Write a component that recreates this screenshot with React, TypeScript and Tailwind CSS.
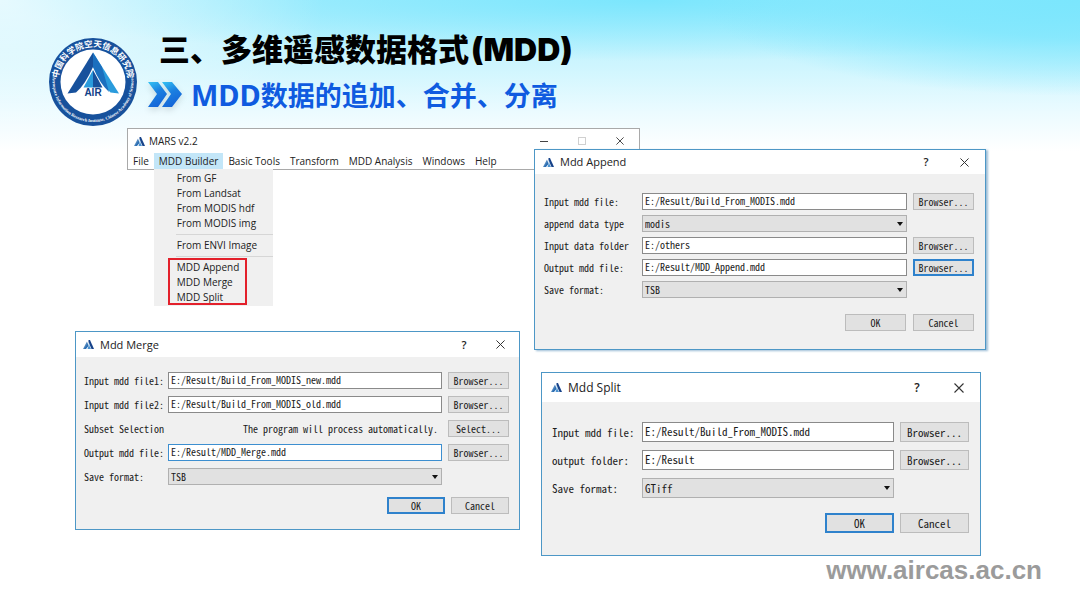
import type { ReactNode } from "react";

function MarsIcon({ className }: { className: string }) {
  return (
    <svg viewBox="0 0 22 18" className={className} aria-hidden="true">
      <path d="M8 3 L0 18 H5 L9 10 Z" fill="#4f86bd" />
      <path d="M8 4 L11 12 L6 18 H2 L8 9 Z" fill="#2d6fb4" />
      <path d="M11 0 H14 L22 18 H17 L11 4 Z" fill="#17438a" />
      <path d="M12 4 L13 12 L16 18 H9 L11 12 Z" fill="#4b92cf" />
    </svg>
  );
}

function CloseIcon({ className }: { className: string }) {
  return (
    <svg viewBox="0 0 10 10" className={className} aria-hidden="true">
      <path d="M0.5 0.5 L9.5 9.5 M9.5 0.5 L0.5 9.5" stroke="#333" strokeWidth="1.1" fill="none" />
    </svg>
  );
}

function InstituteLogo() {
  return (
    <svg viewBox="0 0 88 88" className="size-[88px] shrink-0" role="img" aria-label="AIR">
      <defs>
        <path id="ring-top" d="M 9.5 50 A 35 35 0 1 1 78.5 50" />
        <path id="ring-bottom" d="M 4 38 A 40.4 40.4 0 1 0 84 38" />
      </defs>
      <circle cx="44" cy="44" r="44" fill="#17519c" />
      <circle cx="44" cy="44" r="32.5" fill="#fff" />
      <text fill="#fff" fontSize="8.5" fontWeight="700" fontFamily="'Noto Sans CJK SC', sans-serif">
        <textPath href="#ring-top" startOffset="50%" textAnchor="middle">
          中国科学院空天信息研究院
        </textPath>
      </text>
      <text fill="#fff" fontSize="4.4" fontWeight="700" fontFamily="'Liberation Serif', serif">
        <textPath href="#ring-bottom" startOffset="50%" textAnchor="middle">
          Aerospace Information Research Institute, Chinese Academy of Sciences
        </textPath>
      </text>
      <path d="M44 14.5 L18.5 55.5 L27 54.5 Q36 47 44 29 Z" fill="#17519c" />
      <path d="M44 14.5 L70 55.5 L61.5 54.5 Q53 47 44 29 Z" fill="#2a9bdc" />
      <path d="M44 14.5 L53 29 L60 54 Q51 46 44 29 Z" fill="#1b6fbe" />
      <path d="M44 32 L34.5 49.5 H44 Z" fill="#2a9bdc" />
      <path d="M44 32 L53.5 49.5 H44 Z" fill="#17519c" />
      <text
        x="44"
        y="58"
        textAnchor="middle"
        fontSize="10"
        fontWeight="700"
        fill="#123f87"
        fontFamily="'Liberation Sans', sans-serif"
      >
        AIR
      </text>
    </svg>
  );
}

function DoubleChevron() {
  return (
    <svg viewBox="0 0 38 30" className="h-[30px] w-[38px] shrink-0 drop-shadow-md" aria-hidden="true">
      <defs>
        <linearGradient id="chevron" x1="0" y1="0" x2="0.4" y2="1">
          <stop offset="0" stopColor="#35c3f3" />
          <stop offset="0.5" stopColor="#1b7fe0" />
          <stop offset="1" stopColor="#1566d8" />
        </linearGradient>
      </defs>
      <path d="M1 2 H11 L20 14 L11 27 H1 L10 14 Z" fill="url(#chevron)" />
      <path d="M15 2 H25 L35 14 L25 27 H15 L24 14 Z" fill="url(#chevron)" />
    </svg>
  );
}

type Size = "normal" | "large";

function PushButton({
  children,
  size = "normal",
  focused = false,
}: {
  children: ReactNode;
  size?: Size;
  focused?: boolean;
}) {
  return (
    <button
      type="button"
      className={`flex w-full items-center justify-center bg-[#e1e1e1] whitespace-nowrap ${
        size === "large" ? "h-5" : "h-[17px]"
      } ${focused ? "border-2 border-[#2f82cc]" : "border border-[#bcbcbc]"}`}
    >
      {children}
    </button>
  );
}

type Field = {
  label: string;
  kind: "text" | "select" | "note";
  value: string;
  button?: string;
  active?: boolean;
  buttonFocused?: boolean;
};

function FieldRow({ field, id, size }: { field: Field; id: string; size: Size }) {
  const height = size === "large" ? "h-5" : "h-[17px]";
  return (
    <>
      {field.kind === "note" ? (
        <span className="whitespace-nowrap">{field.label}</span>
      ) : (
        <label htmlFor={id} className="whitespace-nowrap">
          {field.label}
        </label>
      )}
      {field.kind === "text" && (
        <input
          id={id}
          type="text"
          defaultValue={field.value}
          className={`w-full min-w-0 border bg-white px-0.5 pb-0.5 outline-none ${height} ${
            field.active ? "border-[#3d8fd0]" : "border-[#8a8a8a]"
          }`}
        />
      )}
      {field.kind === "select" && (
        <div className="relative">
          <select
            id={id}
            defaultValue={field.value}
            className={`block w-full appearance-none border border-[#b0b0b0] bg-[#e1e1e1] px-0.5 outline-none ${height}`}
          >
            <option>{field.value}</option>
          </select>
          <svg
            viewBox="0 0 6 4"
            className="pointer-events-none absolute top-1/2 right-1 h-1 w-1.5 -translate-y-1/2"
            aria-hidden="true"
          >
            <path d="M0 0 H6 L3 4 Z" fill="#111" />
          </svg>
        </div>
      )}
      {field.kind === "note" && <span className="pr-1 text-right whitespace-nowrap">{field.value}</span>}
      {field.button ? (
        <PushButton size={size} focused={field.buttonFocused}>
          {field.button}
        </PushButton>
      ) : (
        <span />
      )}
    </>
  );
}

function Dialog({
  name,
  title,
  fields,
  size = "normal",
  okFocused = false,
  className,
  titleClass,
  bodyClass,
  gridClass,
  footerClass,
}: {
  name: string;
  title: string;
  fields: Field[];
  size?: Size;
  okFocused?: boolean;
  className: string;
  titleClass: string;
  bodyClass: string;
  gridClass: string;
  footerClass: string;
}) {
  return (
    <section
      aria-label={title}
      className={`absolute flex flex-col border border-[#4d97c6] bg-[#f0f0f0] text-[#1c1c1c] ${className}`}
    >
      <header
        className={`flex items-center bg-white font-['Open_Sans','Noto_Sans',sans-serif] text-[#222] ${titleClass}`}
      >
        <MarsIcon className="h-[9px] w-[11px]" />
        <h3 className="grow pl-1.5">{title}</h3>
        <button type="button" aria-label="Help" className="w-3 font-semibold">
          ?
        </button>
        <button type="button" aria-label="Close" className="flex justify-center">
          <CloseIcon className={size === "large" ? "size-[10px]" : "size-[9px]"} />
        </button>
      </header>
      <form className={`flex flex-col font-['Noto_Sans_Mono_CJK_SC','Liberation_Mono',monospace] ${bodyClass}`}>
        <div className={`grid items-center ${gridClass}`}>
          {fields.map((field, i) => (
            <FieldRow key={field.label} field={field} id={`${name}-${i}`} size={size} />
          ))}
        </div>
        <div className={`grid justify-end ${footerClass}`}>
          <PushButton size={size} focused={okFocused}>
            OK
          </PushButton>
          <PushButton size={size}>Cancel</PushButton>
        </div>
      </form>
    </section>
  );
}

const appendFields: Field[] = [
  { label: "Input mdd file:", kind: "text", value: "E:/Result/Build_From_MODIS.mdd", button: "Browser..." },
  { label: "append data type", kind: "select", value: "modis" },
  { label: "Input data folder", kind: "text", value: "E:/others", button: "Browser..." },
  {
    label: "Output mdd file:",
    kind: "text",
    value: "E:/Result/MDD_Append.mdd",
    button: "Browser...",
    buttonFocused: true,
  },
  { label: "Save format:", kind: "select", value: "TSB" },
];

const mergeFields: Field[] = [
  { label: "Input mdd file1:", kind: "text", value: "E:/Result/Build_From_MODIS_new.mdd", button: "Browser..." },
  { label: "Input mdd file2:", kind: "text", value: "E:/Result/Build_From_MODIS_old.mdd", button: "Browser..." },
  {
    label: "Subset Selection",
    kind: "note",
    value: "The program will process automatically.",
    button: "Select...",
  },
  { label: "Output mdd file:", kind: "text", value: "E:/Result/MDD_Merge.mdd", button: "Browser...", active: true },
  { label: "Save format:", kind: "select", value: "TSB" },
];

const splitFields: Field[] = [
  { label: "Input mdd file:", kind: "text", value: "E:/Result/Build_From_MODIS.mdd", button: "Browser..." },
  { label: "output folder:", kind: "text", value: "E:/Result", button: "Browser..." },
  { label: "Save format:", kind: "select", value: "GTiff" },
];

const menus = ["File", "MDD Builder", "Basic Tools", "Transform", "MDD Analysis", "Windows", "Help"];

function MenuItems({ items }: { items: string[] }) {
  return (
    <>
      {items.map((item) => (
        <button
          key={item}
          type="button"
          role="menuitem"
          className="block h-[15px] w-full pl-[23px] text-left leading-[15px] whitespace-nowrap"
        >
          {item}
        </button>
      ))}
    </>
  );
}

function MarsWindow() {
  return (
    <section
      aria-label="MARS v2.2"
      className="absolute top-32 left-[127px] w-[513px] border border-[#a9a9a9] bg-white font-['Open_Sans','Noto_Sans',sans-serif] text-[10px] text-[#222]"
    >
      <header className="flex h-6 items-center pr-[15px] pl-1.5">
        <MarsIcon className="h-[9px] w-[11px]" />
        <h3 className="grow pl-1">MARS v2.2</h3>
        <div className="flex items-center gap-[30px]">
          <button type="button" aria-label="Minimize" className="h-px w-2 bg-[#444]" />
          <button type="button" aria-label="Maximize" className="size-2 border border-[#d0d0d0]" />
          <button type="button" aria-label="Close">
            <CloseIcon className="size-2" />
          </button>
        </div>
      </header>
      <nav className="flex h-4 items-stretch">
        {menus.map((menu) => (
          <div key={menu} className="relative flex">
            <button
              type="button"
              className={`px-[5px] leading-4 whitespace-nowrap ${menu === "MDD Builder" ? "bg-[#c3e6f8]" : ""}`}
            >
              {menu}
            </button>
            {menu === "MDD Builder" && (
              <div role="menu" className="absolute top-full left-0 w-[119px] bg-[#f0f0f0] pt-0.5 pb-px">
                <MenuItems items={["From GF", "From Landsat", "From MODIS hdf", "From MODIS img"]} />
                <hr className="my-[3px] ml-[22px] border-[#d6d6d6]" />
                <MenuItems items={["From ENVI Image"]} />
                <hr className="my-[3px] ml-[22px] border-[#d6d6d6]" />
                <div className="relative">
                  <MenuItems items={["MDD Append", "MDD Merge", "MDD Split"]} />
                  <div className="pointer-events-none absolute -top-0.5 bottom-0 left-3.5 w-[79px] border-2 border-[#e3202b]" />
                </div>
              </div>
            )}
          </div>
        ))}
      </nav>
    </section>
  );
}

export default function App() {
  return (
    <main className="relative flex min-h-screen flex-col overflow-hidden bg-white">
      <div className="absolute inset-x-0 top-0 h-40 bg-[radial-gradient(ellipse_30%_100%_at_0%_0%,#ffffffb0_0%,#ffffff00_100%),radial-gradient(ellipse_35%_60%_at_100%_0%,#7be6fd_0%,#7be6fdcc_40%,#7be6fd00_100%),radial-gradient(ellipse_60%_38%_at_60%_0%,#7be6fd_0%,#7be6fd00_100%),linear-gradient(to_bottom,#b0effd_0%,#cdf5fe_40%,#ebfbff_70%,#ffffff_95%)]" />

      <header className="relative flex items-start pt-7 pl-[49px]">
        <div className="pt-2.5">
          <InstituteLogo />
        </div>
        <div className="flex flex-col pl-2.5">
          <h1 className="pl-3 font-['Noto_Sans_CJK_SC',sans-serif] text-[31px] leading-10 font-black text-black">
            三、多维遥感数据格式<span className="pl-0.5 font-['Inter',sans-serif] text-[32px]">(MDD)</span>
          </h1>
          <div className="flex items-center gap-1.5">
            <DoubleChevron />
            <h2 className="font-['Noto_Sans_CJK_SC',sans-serif] text-[27px] leading-[50px] font-bold text-[#0f5be0]">
              <span className="font-['Noto_Sans',sans-serif] text-[29px]">MDD</span>数据的追加、合并、分离
            </h2>
          </div>
        </div>
      </header>

      <MarsWindow />

      <Dialog
        name="append"
        title="Mdd Append"
        fields={appendFields}
        className="top-[149px] left-[534px] w-[452px] pb-[18px] text-[10px] leading-3 shadow-[2px_1px_2px_#9dbdd6]"
        titleClass="h-6 pr-4 pl-2 text-[11px] [&>button:last-child]:ml-7"
        bodyClass="gap-4 pt-[19px] pr-[11px] pl-[9px]"
        gridClass="grid-cols-[92px_1fr_61px] gap-x-1.5 gap-y-[5px]"
        footerClass="grid-cols-[61px_61px] gap-x-[7px]"
      />

      <Dialog
        name="merge"
        title="Mdd Merge"
        fields={mergeFields}
        okFocused
        className="top-[331px] left-[75px] w-[445px] pb-[15px] text-[10px] leading-3"
        titleClass="h-[25px] pr-3.5 pl-[7px] text-[11px] [&>button:last-child]:ml-[26px]"
        bodyClass="gap-3 pt-[15px] pr-[10px] pl-2"
        gridClass="grid-cols-[78px_1fr_61px] gap-x-1.5 gap-y-[7px]"
        footerClass="grid-cols-[58px_58px] gap-x-1.5"
      />

      <Dialog
        name="split"
        title="Mdd Split"
        fields={splitFields}
        size="large"
        okFocused
        className="top-[372px] left-[541px] w-[440px] pb-[22px] text-[11px] leading-3"
        titleClass="h-[29px] pr-4 pl-[9px] text-[12px] [&>button:last-child]:ml-[31px]"
        bodyClass="gap-[15px] pt-5 pr-[11px] pl-2.5"
        gridClass="grid-cols-[84px_1fr_69px] gap-x-1.5 gap-y-2"
        footerClass="grid-cols-[69px_69px] gap-x-1.5"
      />

      <footer className="relative mt-auto flex justify-end pr-[38px] pb-[22px]">
        <a
          href="#aircas"
          className="font-['Liberation_Sans',sans-serif] text-[26px] leading-8 font-bold text-[#9b9b9b]"
        >
          www.aircas.ac.cn
        </a>
      </footer>
    </main>
  );
}
